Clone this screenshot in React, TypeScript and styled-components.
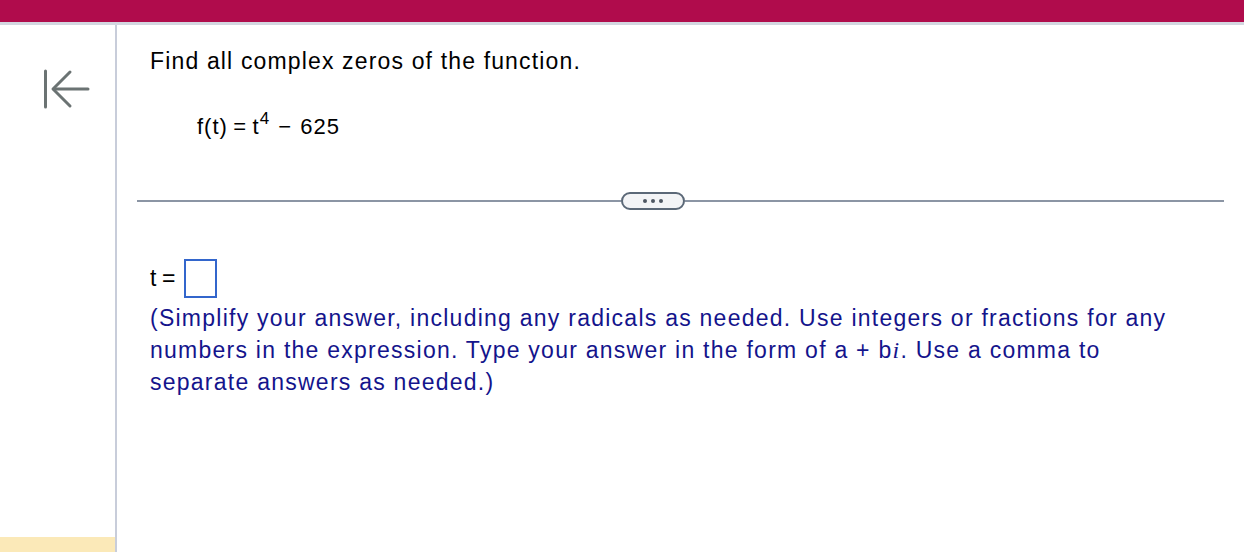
import React from "react";
import styled, { createGlobalStyle } from "styled-components";

const GlobalStyle = createGlobalStyle`
  html, body {
    margin: 0;
    padding: 0;
    background: #fff;
    font-family: "Liberation Sans", Arial, sans-serif;
  }
`;

const Page = styled.div`
  display: flex;
  flex-direction: column;
  width: 1244px;
  height: 552px;
  overflow: hidden;
`;

const TopBar = styled.div`
  height: 22px;
  background: #b00c4c;
  border-bottom: 3px solid #d3d7e0;
  flex-shrink: 0;
`;

const Body = styled.div`
  display: flex;
  flex: 1;
  min-height: 0;
`;

const Sidebar = styled.div`
  width: 115px;
  border-right: 2px solid #c8cdda;
  display: flex;
  flex-direction: column;
  justify-content: space-between;
  flex-shrink: 0;
`;

const CollapseButton = styled.button`
  margin: 41px 0 0 40px;
  width: 52px;
  height: 48px;
  padding: 0;
  border: none;
  background: transparent;
  cursor: pointer;
`;

const SidebarFooter = styled.div`
  height: 15px;
  background: #fbe9b8;
`;

const Main = styled.div`
  flex: 1;
  padding: 21px 20px 0 20px;
  color: #000;
`;

const Question = styled.div`
  padding-left: 13px;
`;

const Prompt = styled.div`
  font-size: 23px;
  line-height: 30px;
  letter-spacing: 1.15px;
`;

const Equation = styled.div`
  font-size: 22px;
  margin: 36px 0 0 47px;
  line-height: 30px;
  letter-spacing: 1px;
  word-spacing: 1px;
`;

const Sup = styled.sup`
  font-size: 17px;
  vertical-align: 10px;
  line-height: 0;
`;

const Divider = styled.div`
  display: flex;
  align-items: center;
  margin-top: 50px;
`;

const Line = styled.div<{ $width?: number }>`
  height: 2px;
  background: #8b95a4;
  ${(p) => (p.$width ? `width: ${p.$width}px;` : "flex: 1;")}
`;

const MorePill = styled.button`
  width: 64px;
  height: 18px;
  border: 2px solid #5b6877;
  border-radius: 9px;
  background: #f3f4f6;
  display: flex;
  align-items: center;
  justify-content: center;
  gap: 4px;
  padding: 0;
  box-sizing: border-box;
`;

const Dot = styled.span`
  width: 4px;
  height: 4px;
  border-radius: 50%;
  background: #4f5762;
`;

const Answer = styled.div`
  padding: 49px 0 0 13px;
`;

const AnswerRow = styled.div`
  display: flex;
  align-items: center;
  font-size: 23px;
  letter-spacing: 0.5px;
  gap: 8px;
`;

const AnswerBox = styled.div`
  width: 33px;
  height: 39px;
  box-sizing: border-box;
  border: 2px solid #3366cc;
  background: #fff;
`;

const Hint = styled.p`
  margin: 4px 0 0 0;
  font-size: 23px;
  line-height: 32px;
  letter-spacing: 1.25px;
  color: #14148c;
  width: 1030px;
`;

const ItalicI = styled.i`
  font-family: "Liberation Serif", "Times New Roman", serif;
  font-size: 24px;
`;

const CollapseIcon = () => (
  <svg width="52" height="48" viewBox="0 0 52 48" fill="none">
    <g stroke="#6b7373" strokeWidth="3" strokeLinecap="round" strokeLinejoin="round">
      <line x1="5.5" y1="5" x2="5.5" y2="41" />
      <line x1="14" y1="23" x2="48" y2="23" />
      <polyline points="30,6 13,23 30,40" />
    </g>
  </svg>
);

const App: React.FC = () => {
  return (
    <>
      <GlobalStyle />
      <Page>
        <TopBar />
        <Body>
          <Sidebar>
            <CollapseButton aria-label="Collapse">
              <CollapseIcon />
            </CollapseButton>
            <SidebarFooter />
          </Sidebar>
          <Main>
            <Question>
              <Prompt>Find all complex zeros of the function.</Prompt>
              <Equation>
                f(t)&thinsp;=&thinsp;t<Sup>4</Sup> − 625
              </Equation>
            </Question>
            <Divider>
              <Line $width={484} />
              <MorePill aria-label="More">
                <Dot />
                <Dot />
                <Dot />
              </MorePill>
              <Line />
            </Divider>
            <Answer>
              <AnswerRow>
                t&thinsp;=<AnswerBox />
              </AnswerRow>
              <Hint>
                (Simplify your answer, including any radicals as needed. Use integers or fractions for any
                numbers in the expression. Type your answer in the form of a + b<ItalicI>i</ItalicI>. Use a
                comma to separate answers as needed.)
              </Hint>
            </Answer>
          </Main>
        </Body>
      </Page>
    </>
  );
};

export default App;
